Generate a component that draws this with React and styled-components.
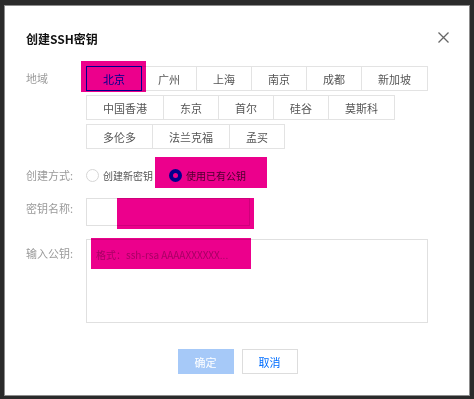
import React from "react";
import styled, { createGlobalStyle } from "styled-components";

const GlobalStyle = createGlobalStyle`
  html, body {
    margin: 0;
    background: #2b2b2b;
    font-family: "Noto Sans CJK SC", "Noto Sans", sans-serif;
  }
`;

const Modal = styled.div`
  position: relative;
  box-sizing: border-box;
  width: 466px;
  height: 391px;
  margin: 5px 0 0 4px;
  padding: 22px 20px 0 21px;
  background: #fff;
  border: 1px solid #8d8d8d;
  display: flex;
  flex-direction: column;
`;

const Header = styled.div`
  display: flex;
  justify-content: space-between;
  align-items: center;
  height: 20px;
`;

const Title = styled.div`
  font-size: 12px;
  font-weight: 700;
  color: #111;
`;

const Close = styled.button`
  border: 0;
  background: none;
  padding: 0;
  width: 11px;
  height: 11px;
  display: flex;
  margin-top: -1px;
`;

const Form = styled.div`
  display: grid;
  grid-template-columns: 60px 342px;
  margin-top: 18px;
  align-items: start;
`;

const Label = styled.div`
  font-size: 11px;
  color: #9a9a9a;
  line-height: ${(p) => p.$lh}px;
  margin-top: ${(p) => p.$mt || 0}px;
`;

const Field = styled.div`
  margin-top: ${(p) => p.$mt || 0}px;
`;

const Tabs = styled.div`
  display: flex;
  flex-direction: column;
  gap: 4px;
`;

const TabRow = styled.div`
  display: flex;
`;

const Tab = styled.div`
  position: relative;
  height: 25px;
  padding: 0 16px;
  margin-left: -1px;
  border: 1px solid ${(p) => (p.$active ? "#006eff" : "#e3e3e3")};
  z-index: ${(p) => (p.$active ? 1 : 0)};
  box-sizing: border-box;
  display: flex;
  align-items: center;
  font-size: 11px;
  color: ${(p) => (p.$active ? "#006eff" : "#555")};
  background: #fff;

  &:first-child {
    margin-left: 0;
  }
`;

const RadioGroup = styled.div`
  display: flex;
  align-items: center;
  height: 30px;
  gap: 16px;
`;

const RadioItem = styled.label`
  display: flex;
  align-items: center;
  gap: 4px;
  font-size: 10px;
  color: #555;
`;

const Dot = styled.span`
  box-sizing: border-box;
  width: 13px;
  height: 13px;
  border-radius: 50%;
  border: ${(p) => (p.$checked ? "4px solid #006eff" : "1px solid #d6d6d6")};
  background: #fff;
`;

const Input = styled.input`
  box-sizing: border-box;
  width: 164px;
  height: 28px;
  border: 1px solid #e0e0e0;
  outline: none;
  display: block;
`;

const TextArea = styled.textarea`
  box-sizing: border-box;
  display: block;
  width: 342px;
  height: 84px;
  border: 1px solid #e0e0e0;
  resize: none;
  outline: none;
  padding: 7px 9px;
  font-family: "Noto Sans CJK SC", "Noto Sans", sans-serif;
  font-size: 10px;

  &::placeholder {
    color: #b8b8b8;
  }
`;

const Footer = styled.div`
  display: flex;
  justify-content: center;
  gap: 8px;
  margin-top: 26px;
`;

const Button = styled.button`
  box-sizing: border-box;
  width: 56px;
  height: 25px;
  font-family: inherit;
  font-size: 11px;
  border: 1px solid ${(p) => (p.$primary ? "#a6c9f8" : "#dddddd")};
  background: ${(p) => (p.$primary ? "#a6c9f8" : "#fff")};
  color: ${(p) => (p.$primary ? "#fff" : "#006eff")};
  padding: 0;
`;

// redaction marks drawn over the screenshot
const Highlight = styled.div`
  position: absolute;
  background: #ec008c;
  mix-blend-mode: multiply;
  pointer-events: none;
  z-index: 5;
`;

const regions = [
  ["北京", "广州", "上海", "南京", "成都", "新加坡"],
  ["中国香港", "东京", "首尔", "硅谷", "莫斯科"],
  ["多伦多", "法兰克福", "孟买"],
];

const marks = [
  { left: 76, top: 55, width: 65, height: 31 },
  { left: 150, top: 151, width: 112, height: 31 },
  { left: 112, top: 192, width: 137, height: 31 },
  { left: 86, top: 232, width: 160, height: 31 },
];

export default function App() {
  return (
    <>
      <GlobalStyle />
      <Modal>
        <Header>
          <Title>创建SSH密钥</Title>
          <Close aria-label="close">
            <svg width="11" height="11" viewBox="0 0 11 11">
              <path d="M0.5 0.5 L10.5 10.5 M10.5 0.5 L0.5 10.5" stroke="#666" strokeWidth="1.3" fill="none" />
            </svg>
          </Close>
        </Header>

        <Form>
          <Label $lh={25}>地域</Label>
          <Tabs>
            {regions.map((row, i) => (
              <TabRow key={i}>
                {row.map((name) => (
                  <Tab key={name} $active={name === "北京"}>
                    {name}
                  </Tab>
                ))}
              </TabRow>
            ))}
          </Tabs>

          <Label $lh={30} $mt={11}>创建方式:</Label>
          <Field $mt={11}>
            <RadioGroup>
              <RadioItem>
                <Dot />
                创建新密钥
              </RadioItem>
              <RadioItem>
                <Dot $checked />
                使用已有公钥
              </RadioItem>
            </RadioGroup>
          </Field>

          <Label $lh={20} $mt={8}>密钥名称:</Label>
          <Field $mt={8}>
            <Input />
          </Field>

          <Label $lh={28} $mt={13}>输入公钥:</Label>
          <Field $mt={13}>
            <TextArea placeholder="格式：ssh-rsa AAAAXXXXXX..." />
          </Field>
        </Form>

        <Footer>
          <Button $primary disabled>确定</Button>
          <Button>取消</Button>
        </Footer>

        {marks.map((m, i) => (
          <Highlight key={i} style={m} />
        ))}
      </Modal>
    </>
  );
}
